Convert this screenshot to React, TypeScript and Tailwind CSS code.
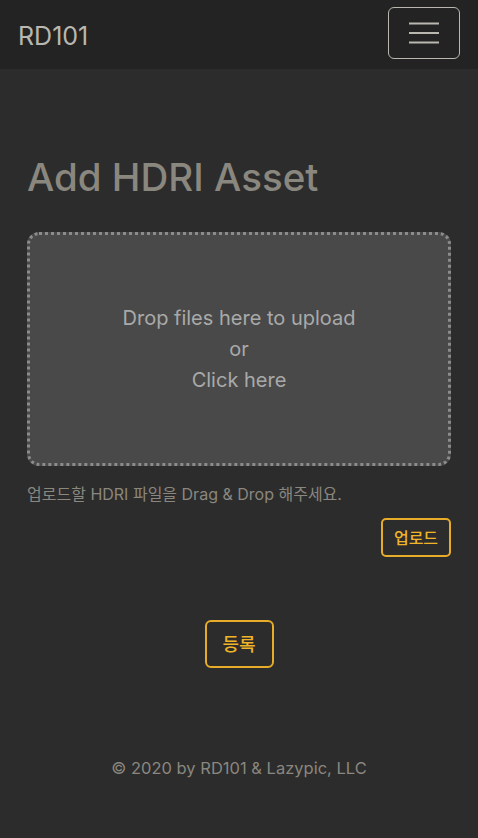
import React from 'react';

const sans = { fontFamily: 'Inter, "Noto Sans CJK KR", sans-serif' };

const Navbar: React.FC = () => (
  <nav className="flex h-[69px] items-center justify-between bg-[#232323] pl-[18px] pr-[18px]">
    <a href="#" className="mt-[3px] text-[25px] leading-none text-[#b9b7af]">
      RD101
    </a>
    <button
      type="button"
      className="mt-[-4px] flex h-[52px] w-[72px] items-center justify-center rounded-[6px] border border-[#b9b7af]"
      aria-label="Toggle navigation"
    >
      <svg width="32" height="24" viewBox="0 0 32 24" fill="none">
        <path d="M1 2.5h30M1 12h30M1 21.5h30" stroke="#b9b7af" strokeWidth="2.2" />
      </svg>
    </button>
  </nav>
);

const App: React.FC = () => {
  return (
    <div className="min-h-[838px] bg-[#2c2c2c]" style={sans}>
      <Navbar />
      <main className="px-[27px] pt-[84px]">
        <h1 className="text-[38.5px] font-medium leading-[48px] text-[#8a877f]">Add HDRI Asset</h1>

        <div className="mt-[31px] flex h-[234px] cursor-pointer flex-col items-center justify-center rounded-[12px] border-[3px] border-dotted border-[#8c8c8c] bg-[#494949] text-center text-[20px] leading-[31px] text-[#a9a9a9]">
          <span>Drop files here to upload</span>
          <span>or</span>
          <span>Click here</span>
        </div>

        <p className="mt-4 text-[16px] leading-6 text-[#8a877f]">업로드할 HDRI 파일을 Drag &amp; Drop 해주세요.</p>

        <div className="mt-3 flex justify-end">
          <button
            type="button"
            className="h-[39px] w-[70px] rounded-[5px] border-2 border-[#e8ac2b] text-[16px] font-medium text-[#f0b429]"
          >
            업로드
          </button>
        </div>

        <div className="mt-[63px] flex justify-center">
          <button
            type="button"
            className="h-[48px] w-[69px] rounded-[6px] border-2 border-[#e8ac2b] text-[18px] font-medium text-[#f0b429]"
          >
            등록
          </button>
        </div>
      </main>

      <footer className="pb-[57px] pt-[88px] text-center text-[16.5px] leading-6 text-[#8a877f]">
        © 2020 by RD101 &amp; Lazypic, LLC
      </footer>
    </div>
  );
};

export default App;
